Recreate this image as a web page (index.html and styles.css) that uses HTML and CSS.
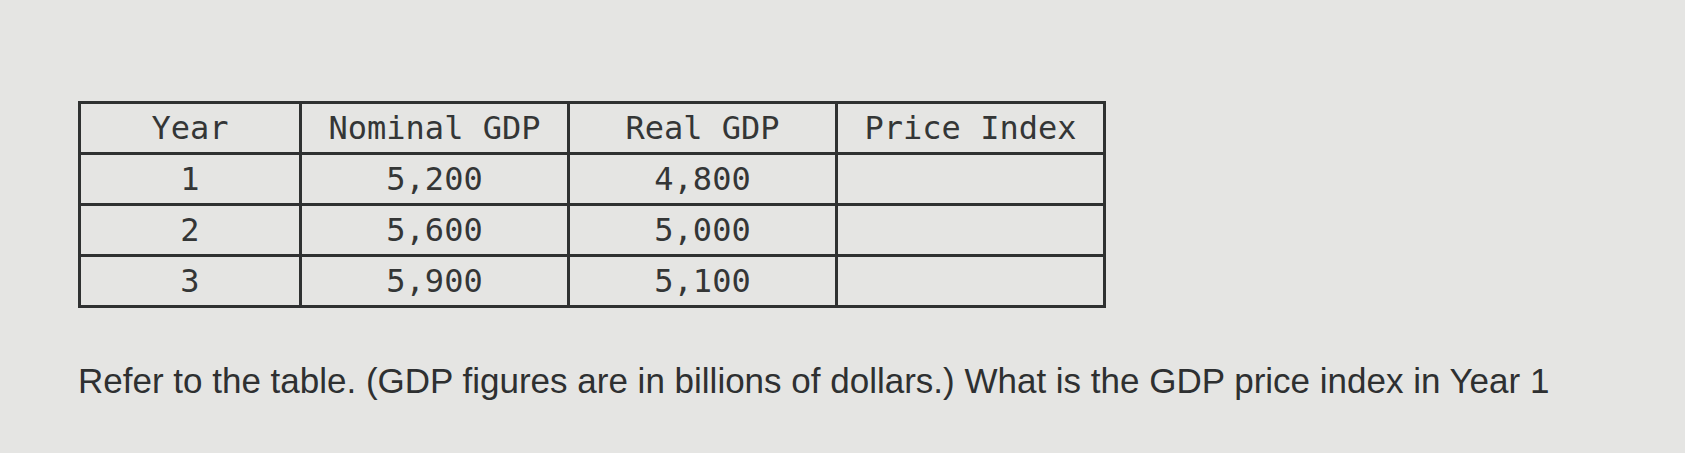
FILE: index.html
```html
<!DOCTYPE html>
<html>
<head>
<meta charset="utf-8">
<link rel="stylesheet" href="styles.css">
</head>
<body>
<main class="page">
  <table class="gdp">
    <tr><th>Year</th><th>Nominal GDP</th><th>Real GDP</th><th>Price Index</th></tr>
    <tr><td>1</td><td>5,200</td><td>4,800</td><td></td></tr>
    <tr><td>2</td><td>5,600</td><td>5,000</td><td></td></tr>
    <tr><td>3</td><td>5,900</td><td>5,100</td><td></td></tr>
  </table>
  <p class="question">Refer to the table. (GDP figures are in billions of dollars.) What is the GDP price index in Year 1</p>
</main>
</body>
</html>
```
FILE: styles.css
```css
html, body {
  margin: 0;
  padding: 0;
  background: #e5e5e3;
}
.page {
  padding: 101px 0 0 78px;
}
.gdp {
  border-collapse: collapse;
  font-family: "DejaVu Sans Mono", "Liberation Mono", monospace;
  font-size: 32px;
  color: #343636;
}
.gdp th, .gdp td {
  border: 3px solid #2f3131;
  height: 48px;
  padding: 0;
  text-align: center;
  font-weight: normal;
  vertical-align: middle;
}
.gdp th:nth-child(1), .gdp td:nth-child(1) { width: 218px; }
.gdp th:nth-child(n+2), .gdp td:nth-child(n+2) { width: 265px; }
.question {
  margin: 53px 0 0 0;
  font-family: "Liberation Sans", Arial, sans-serif;
  font-size: 35px;
  color: #2e3031;
}
```
